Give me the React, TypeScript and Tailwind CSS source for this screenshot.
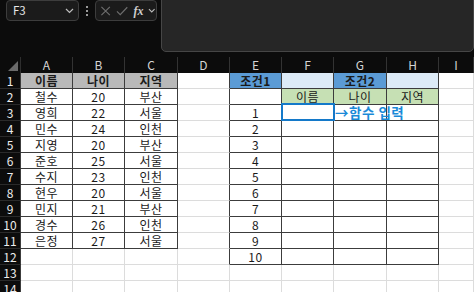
import React from 'react';

const COLS = ['A', 'B', 'C', 'D', 'E', 'F', 'G', 'H', 'I'];

const people: [string, number, string][] = [
  ['철수', 20, '부산'],
  ['영희', 22, '서울'],
  ['민수', 24, '인천'],
  ['지영', 20, '부산'],
  ['준호', 25, '서울'],
  ['수지', 23, '인천'],
  ['현우', 20, '서울'],
  ['민지', 21, '부산'],
  ['경수', 26, '인천'],
  ['은정', 27, '서울'],
];

const Cell = ({ r, c }: { r: number; c: number }) => {
  const inLeft = c <= 2 && r <= 11;
  const inRight = c >= 4 && c <= 7 && r <= 12;
  const darkR = inLeft || inRight || (c === 3 && r <= 12);
  const darkB = inLeft || inRight;

  let text: React.ReactNode = null;
  let bg = 'bg-white';
  let weight = 'font-normal';

  if (inLeft) {
    if (r === 1) {
      text = ['이름', '나이', '지역'][c];
      bg = 'bg-[#b9b9b9]';
      weight = 'font-bold';
    } else {
      text = people[r - 2][c];
    }
  }

  if (inRight) {
    if (r === 1) {
      if (c === 4 || c === 6) {
        text = c === 4 ? '조건1' : '조건2';
        bg = 'bg-[#5b9bd5]';
        weight = 'font-bold';
      } else {
        bg = 'bg-[#ddebf7]';
      }
    } else if (r === 2 && c >= 5) {
      text = ['이름', '나이', '지역'][c - 5];
      bg = 'bg-[#c6e0b4]';
    } else if (c === 4 && r >= 3) {
      text = r - 2;
    }
  }

  const selected = r === 3 && c === 5;

  return (
    <div
      className={`relative h-[16px] border-r border-b flex items-center justify-center text-[12px] leading-none text-[#1a1a1a] tracking-[0.5px] ${bg} ${weight} ${
        darkR ? 'border-r-[#3c3c3c]' : 'border-r-[#dcdcdc]'
      } ${darkB ? 'border-b-[#3c3c3c]' : 'border-b-[#dcdcdc]'}`}
    >
      {text}
      {selected && (
        <>
          <div className="absolute -left-[1px] -top-[2px] w-[54px] h-[18px] border-[2px] border-[#1479c9] z-10" />
          <div className="absolute left-[53px] top-[1px] h-[14px] flex items-center whitespace-nowrap text-[13.5px] leading-none font-bold text-[#1a8ad8] z-10">
            →함수 입력
          </div>
        </>
      )}
    </div>
  );
};

const App = () => {
  const rows = Array.from({ length: 14 }, (_, i) => i + 1);

  return (
    <div
      className="w-[474px] h-[292px] overflow-hidden bg-[#0c0c0c] select-none"
      style={{ fontFamily: '"Noto Sans CJK KR", "Noto Sans", sans-serif' }}
    >
      {/* Top: name box + formula bar */}
      <div className="h-[57px] flex items-start">
        <div className="ml-[6px] w-[73px] h-[21px] rounded-[4px] border border-[#3d3d3d] bg-[#1b1b1b] flex items-center justify-between pl-[6px] pr-[4px]">
          <span className="text-[11.5px] text-[#e8e8e8]">F3</span>
          <svg width="9" height="6" viewBox="0 0 9 6">
            <path d="M1 1 L4.5 4.5 L8 1" stroke="#bdbdbd" strokeWidth="1.2" fill="none" />
          </svg>
        </div>
        <div className="w-[16px] h-[21px] flex flex-col items-center justify-center gap-[2px]">
          <span className="w-[2px] h-[2px] bg-[#9a9a9a]" />
          <span className="w-[2px] h-[2px] bg-[#9a9a9a]" />
          <span className="w-[2px] h-[2px] bg-[#9a9a9a]" />
        </div>
        <div className="w-[62px] h-[21px] rounded-[4px] border border-[#3d3d3d] bg-[#1b1b1b] flex items-center pl-[4px] gap-[5px]">
          <svg width="12" height="12" viewBox="0 0 12 12">
            <path d="M1.5 1.5 L10.5 10.5 M10.5 1.5 L1.5 10.5" stroke="#6e6e6e" strokeWidth="1.2" />
          </svg>
          <svg width="13" height="12" viewBox="0 0 13 12">
            <path d="M1 6.5 L4.5 10 L12 2" stroke="#6e6e6e" strokeWidth="1.2" fill="none" />
          </svg>
          <span className="text-[12px] italic font-bold text-[#cfcfcf] leading-none" style={{ fontFamily: '"Liberation Serif", serif' }}>
            fx
          </span>
          <svg width="8" height="6" viewBox="0 0 8 6">
            <path d="M1 1 L4 4 L7 1" stroke="#bdbdbd" strokeWidth="1.1" fill="none" />
          </svg>
        </div>
        <div className="ml-[4px] flex-1 h-[57px] -mt-[5px] rounded-[5px] border border-[#464646] bg-[#262626]" />
      </div>

      {/* Sheet grid */}
      <div className="grid grid-cols-[21px_52px_52px_53px_52px_52px_52px_53px_52px_1fr]">
        <div className="h-[16px] border-r border-[#2e2e2e] flex items-end justify-end pr-[2px] pb-[2px]">
          <svg width="10" height="10" viewBox="0 0 10 10">
            <path d="M10 0 L10 10 L0 10 Z" fill="#6a6a6a" />
          </svg>
        </div>
        {COLS.map((col) => (
          <div
            key={col}
            className="h-[16px] border-r border-[#333] flex items-center justify-center text-[12px] text-[#d4d4d4] leading-none"
          >
            {col}
          </div>
        ))}

        {rows.map((r) => (
          <React.Fragment key={r}>
            <div className="h-[16px] border-b border-r border-b-[#2a2a2a] border-r-[#3c3c3c] flex items-center justify-center text-[12px] text-[#ececec] leading-none">
              {r}
            </div>
            {COLS.map((_, c) => (
              <Cell key={c} r={r} c={c} />
            ))}
          </React.Fragment>
        ))}
      </div>
    </div>
  );
};

export default App;
